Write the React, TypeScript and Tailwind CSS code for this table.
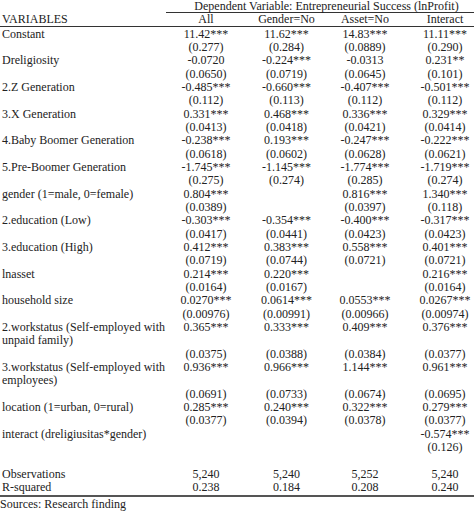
type Row = { label?: string[]; v: string[] };

const rows: Row[] = [
  { label: ["Constant"], v: ["11.42***", "11.62***", "14.83***", "11.11***"] },
  { v: ["(0.277)", "(0.284)", "(0.0889)", "(0.290)"] },
  { label: ["Dreligiosity"], v: ["-0.0720", "-0.224***", "-0.0313", "0.231**"] },
  { v: ["(0.0650)", "(0.0719)", "(0.0645)", "(0.101)"] },
  { label: ["2.Z Generation"], v: ["-0.485***", "-0.660***", "-0.407***", "-0.501***"] },
  { v: ["(0.112)", "(0.113)", "(0.112)", "(0.112)"] },
  { label: ["3.X Generation"], v: ["0.331***", "0.468***", "0.336***", "0.329***"] },
  { v: ["(0.0413)", "(0.0418)", "(0.0421)", "(0.0414)"] },
  { label: ["4.Baby Boomer Generation"], v: ["-0.238***", "0.193***", "-0.247***", "-0.222***"] },
  { v: ["(0.0618)", "(0.0602)", "(0.0628)", "(0.0621)"] },
  { label: ["5.Pre-Boomer Generation"], v: ["-1.745***", "-1.145***", "-1.774***", "-1.719***"] },
  { v: ["(0.275)", "(0.274)", "(0.285)", "(0.274)"] },
  { label: ["gender (1=male, 0=female)"], v: ["0.804***", "", "0.816***", "1.340***"] },
  { v: ["(0.0389)", "", "(0.0397)", "(0.118)"] },
  { label: ["2.education (Low)"], v: ["-0.303***", "-0.354***", "-0.400***", "-0.317***"] },
  { v: ["(0.0417)", "(0.0441)", "(0.0423)", "(0.0423)"] },
  { label: ["3.education (High)"], v: ["0.412***", "0.383***", "0.558***", "0.401***"] },
  { v: ["(0.0719)", "(0.0744)", "(0.0721)", "(0.0721)"] },
  { label: ["lnasset"], v: ["0.214***", "0.220***", "", "0.216***"] },
  { v: ["(0.0164)", "(0.0167)", "", "(0.0164)"] },
  { label: ["household size"], v: ["0.0270***", "0.0614***", "0.0553***", "0.0267***"] },
  { v: ["(0.00976)", "(0.00991)", "(0.00966)", "(0.00974)"] },
  { label: ["2.workstatus (Self-employed with", "unpaid family)"], v: ["0.365***", "0.333***", "0.409***", "0.376***"] },
  { v: ["(0.0375)", "(0.0388)", "(0.0384)", "(0.0377)"] },
  { label: ["3.workstatus (Self-employed with", "employees)"], v: ["0.936***", "0.966***", "1.144***", "0.961***"] },
  { v: ["(0.0691)", "(0.0733)", "(0.0674)", "(0.0695)"] },
  { label: ["location (1=urban, 0=rural)"], v: ["0.285***", "0.240***", "0.322***", "0.279***"] },
  { v: ["(0.0377)", "(0.0394)", "(0.0378)", "(0.0377)"] },
  { label: ["interact (dreligiusitas*gender)"], v: ["", "", "", "-0.574***"] },
  { v: ["", "", "", "(0.126)"] },
  { v: ["", "", "", ""] },
  { label: ["Observations"], v: ["5,240", "5,240", "5,252", "5,240"] },
  { label: ["R-squared"], v: ["0.238", "0.184", "0.208", "0.240"] },
];

const grid = "grid grid-cols-[166px_80px_81px_76px_84px]";

export default function App() {
  return (
    <div className="w-[474px] h-[511px] overflow-hidden bg-white text-[#222] text-[12px] leading-[13.35px] font-['Liberation_Serif',serif]">
      <div className="w-[487px]">
        {/* header */}
        <div className={grid}>
          <div />
          <div className="col-span-4 text-center h-[13px] border-b border-[#333]">
            Dependent Variable: Entrepreneurial Success (lnProfit)
          </div>
        </div>
        <div className={`${grid} h-[14px] border-b border-[#333]`}>
          <div className="pl-[2px]">VARIABLES</div>
          <div className="text-center">All</div>
          <div className="text-center">Gender=No</div>
          <div className="text-center">Asset=No</div>
          <div className="text-center">Interact</div>
        </div>

        {/* body */}
        <div className="pt-[0.5px] border-b-2 border-[#555]">
          {rows.map((r, i) => (
            <div key={i} className={grid}>
              <div className="pl-[2px] whitespace-nowrap">
                {(r.label ?? [""]).map((l, j) => (
                  <div key={j} className="h-[13.35px]">{l}</div>
                ))}
              </div>
              {r.v.map((x, j) => (
                <div key={j} className="text-center whitespace-nowrap h-[13.35px]">
                  {x}
                </div>
              ))}
            </div>
          ))}
        </div>
        <div className="pt-[1px]">Sources: Research finding</div>
      </div>
    </div>
  );
}
